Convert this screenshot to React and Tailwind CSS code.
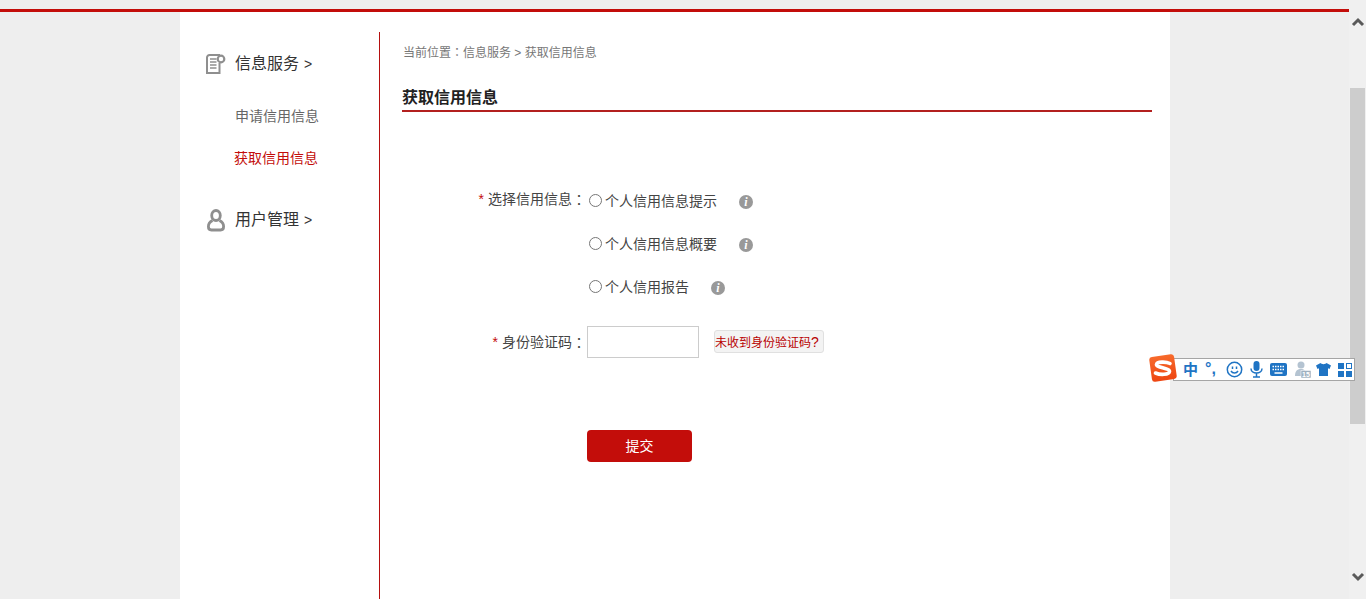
import React from 'react';

const font = { fontFamily: '"Liberation Sans", "Noto Sans CJK SC", sans-serif' };

// 目标图里的全角标点是居中的，用繁中字形
const Punct = ({ children }) => <span className="font-['Noto_Sans_CJK_TC',sans-serif]">{children}</span>;

const InfoIcon = () => (
  <span className="w-[14px] h-[14px] rounded-full bg-[#999999] text-white text-[12px] font-bold italic leading-[14px] text-center font-['Liberation_Serif',serif]">
    i
  </span>
);

const DocIcon = () => (
  <svg width="20" height="20" viewBox="0 0 20 20" fill="none" stroke="#8f8f8f">
    <path d="M14 1H3.500A2.500 2.500 0 0 0 1 3.500V19h12.500V9" strokeWidth="2" />
    <circle cx="15" cy="5" r="3.300" strokeWidth="2.200" />
    <path d="M4 5h6.500M4 8h6.500M4 11h6.500M4 14h6.500" strokeWidth="1.500" />
  </svg>
);

const UserIcon = () => (
  <svg width="20" height="23" viewBox="0 0 20 23" fill="none" stroke="#8f8f8f" strokeWidth="2.800" className="shrink-0">
    <ellipse cx="10" cy="6.500" rx="4.300" ry="5" />
    <path d="M6.500 11.500C3.500 13 2.400 15 2.400 17.500c0 2 1 3.500 3 3.500h9.200c2 0 3-1.500 3-3.500 0-2.500-1.100-4.500-4.100-6" />
  </svg>
);

const RadioRow = ({ label, textWidth }) => (
  <div className="flex items-center h-[43px]">
    <input type="radio" name="credit" className="w-[13px] h-[13px] m-0 mr-[3px] ml-[2px] -translate-y-[1px]" />
    <span className={`text-[14px] text-[#444444] ${textWidth}`}>{label}</span>
    <InfoIcon />
  </div>
);

const ImeBar = () => (
  <div className="absolute left-[1149px] top-[354px] flex items-start">
    <svg width="28" height="28" viewBox="0 0 28 28" className="z-10 shrink-0">
      <defs>
        <linearGradient id="sg" x1="0" y1="0" x2="0" y2="1">
          <stop offset="0" stopColor="#f76a2b" />
          <stop offset="1" stopColor="#ee4612" />
        </linearGradient>
      </defs>
      <rect x="1.500" y="1.500" width="25" height="25" rx="3" transform="rotate(-8 14 14)" fill="url(#sg)" />
      <path d="M21 9.500C17 7.500 8 7.500 7.500 10.500S21 14 20.500 17.500 11 21 6.500 19" fill="none" stroke="#fff" strokeWidth="3.600" strokeLinecap="round" />
    </svg>
    <div className="-ml-[4px] mt-[4px] h-[23px] w-[182px] shrink-0 bg-white border border-[#a5a5a5] flex items-center text-[#1f74c4]">
      <span className="ml-[9px] w-[15px] text-[15px] font-bold leading-none">中</span>
      <span className="ml-[7px] w-[14px] text-[16px] font-bold leading-none -translate-y-[1px]">°,</span>
      <svg width="17" height="17" viewBox="0 0 17 17" fill="none" stroke="currentColor" strokeWidth="1.500" className="ml-[7px]">
        <circle cx="8.500" cy="8.500" r="7.200" />
        <path d="M5 10c1.500 2.500 5.500 2.500 7 0M6.500 5.500v2.500M10.500 5.500v2.500" />
      </svg>
      <svg width="13" height="17" viewBox="0 0 13 17" className="ml-[7px]">
        <rect x="3.500" y="0" width="6" height="10" rx="3" fill="currentColor" />
        <path d="M1 7.500c0 6 11 6 11 0M6.500 12.500v3M3 16h7" fill="none" stroke="currentColor" strokeWidth="1.500" />
      </svg>
      <svg width="17" height="13" viewBox="0 0 17 13" className="ml-[7px]">
        <rect width="17" height="13" rx="2" fill="currentColor" />
        <path d="M2.500 3.500h12M2.500 6.500h12" stroke="#fff" strokeWidth="1.500" strokeDasharray="1.500 1" />
        <path d="M4.500 10h8" stroke="#fff" strokeWidth="1.500" />
      </svg>
      <svg width="17" height="17" viewBox="0 0 17 17" className="ml-[7px]">
        <circle cx="7" cy="4" r="3.500" fill="#b4c3d1" />
        <path d="M1 15c0-6 3-7 6-7s5 1 5 7z" fill="#b4c3d1" />
        <rect x="7" y="9.500" width="10" height="7.500" fill="#9fb0bf" stroke="#fff" strokeWidth=".5" />
        <text x="12" y="15.800" textAnchor="middle" fontSize="7" fontWeight="700" fill="#fff">15</text>
      </svg>
      <svg width="15" height="15" viewBox="0 0 15 15" className="ml-[5px]">
        <path d="M4.500 1c1 1.500 5 1.500 6 0L15 3.500l-1.500 3.500-1.500-.7V14H3V6.300L1.500 7 0 3.500z" fill="currentColor" />
      </svg>
      <svg width="14" height="14" viewBox="0 0 14 14" className="ml-[7px]">
        <rect width="6" height="6" fill="currentColor" />
        <rect x="8.500" y=".5" width="5" height="5" fill="none" stroke="currentColor" />
        <rect y="8" width="6" height="6" fill="currentColor" />
        <rect x="8" y="8" width="6" height="6" fill="currentColor" />
      </svg>
    </div>
  </div>
);

const Scrollbar = () => (
  <div className="w-[17px] shrink-0 bg-[#f0f0f0] flex flex-col items-center">
    <svg width="14" height="17" viewBox="0 0 14 17" className="mt-[12px]">
      <path d="M2 13l5-5 5 5" fill="none" stroke="#5a5a5a" strokeWidth="3" />
    </svg>
    <div className="mt-[59px] w-[15px] h-[336px] bg-[#cdcdcd]" />
    <svg width="14" height="17" viewBox="0 0 14 17" className="mt-[146px]">
      <path d="M2 4l5 5 5-5" fill="none" stroke="#5a5a5a" strokeWidth="3" />
    </svg>
  </div>
);

export default function App() {
  return (
    <div className="relative flex h-[599px] w-[1366px] overflow-hidden bg-[#eeeeee]" style={font}>
      <div className="flex-1 flex flex-col">
        <div className="h-[9px]" />
        <div className="h-[3px] bg-[#c30d0a]" />
        <div className="flex-1 ml-[180px] w-[990px] bg-white flex pt-[20px]">
          {/* 左侧菜单 */}
          <div className="w-[200px] border-r border-[#b5100f] pl-[26px]">
            <div className="flex items-center mt-[20px] h-[24px]">
              <DocIcon />
              <span className="ml-[9px] text-[16px] text-[#333333]">信息服务</span>
              <span className="ml-[5px] text-[14px] text-[#333333]">&gt;</span>
            </div>
            <div className="ml-[29px] mt-[30px] text-[14px] leading-[20px] text-[#666666]">申请信用信息</div>
            <div className="ml-[28px] mt-[22px] text-[14px] leading-[20px] text-[#c30d0a]">获取信用信息</div>
            <div className="flex items-center mt-[40px] h-[24px]">
              <UserIcon />
              <span className="ml-[9px] text-[16px] text-[#333333]">用户管理</span>
              <span className="ml-[5px] text-[14px] text-[#333333]">&gt;</span>
            </div>
          </div>

          {/* 右侧内容 */}
          <div className="w-[750px] ml-[22px]">
            <div className="mt-[11px] ml-[1px] text-[12px] leading-[18px] text-[#777777]">
              当前位置<Punct>：</Punct>信息服务 &gt; 获取信用信息
            </div>
            <div className="mt-[23px] h-[27px] border-b-2 border-[#b3201f] text-[16px] font-bold leading-[26px] text-[#222222]">
              获取信用信息
            </div>

            <div className="mt-[68px] flex">
              <div className="w-[185px] h-[43px] pr-[1px] flex items-center justify-end text-[14px] text-[#444444] -translate-y-[2px]">
                <span className="text-[#c30d0a] mr-[4px]">*</span>选择信用信息<Punct>：</Punct>
              </div>
              <div>
                <RadioRow label="个人信用信息提示" textWidth="w-[134px]" />
                <RadioRow label="个人信用信息概要" textWidth="w-[134px]" />
                <RadioRow label="个人信用报告" textWidth="w-[106px]" />
              </div>
            </div>

            <div className="mt-[17px] flex items-start">
              <div className="w-[185px] h-[32px] pr-[1px] flex items-center justify-end text-[14px] text-[#444444]">
                <span className="text-[#c30d0a] mr-[4px]">*</span>身份验证码<Punct>：</Punct>
              </div>
              <input type="text" className="w-[112px] h-[32px] border border-[#cccccc] bg-white" />
              <button className="ml-[15px] mt-[4px] h-[23px] w-[110px] rounded-[3px] border border-[#e0e0e0] bg-[#f3f3f3] text-left text-[12px] text-[#b80000] whitespace-nowrap leading-none">
                未收到身份验证码<span className="text-[14px]">?</span>
              </button>
            </div>

            <button className="mt-[72px] ml-[185px] block w-[105px] h-[32px] rounded-[4px] bg-[#c30d0a] text-white text-[14px]">
              提交
            </button>
          </div>
        </div>
      </div>
      <Scrollbar />
      <ImeBar />
    </div>
  );
}
